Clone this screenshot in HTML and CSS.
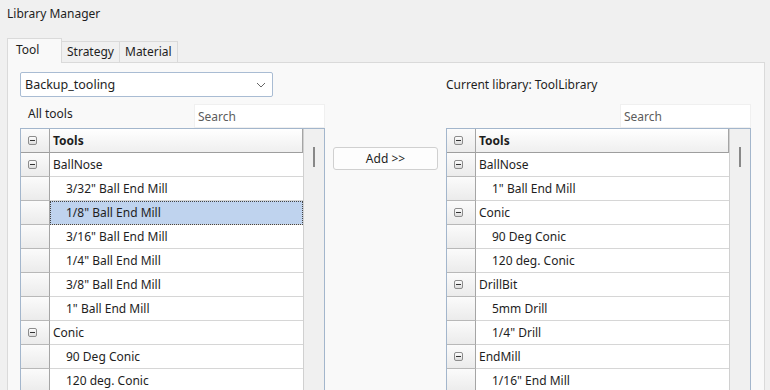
FILE: index.html
```html
<!DOCTYPE html>
<html lang="en">
<head>
    <meta charset="UTF-8">
    <title>Library Manager</title>
    <link rel="stylesheet" href="styles.css">
</head>
<body>
    <div class="title">Library Manager</div>

    <div class="tabs">
        <div class="tab active">Tool</div>
        <div class="tab">Strategy</div>
        <div class="tab">Material</div>
    </div>

    <div class="panel">
        <!-- left: tools from the selected backup library -->
        <div class="column">
            <div class="select">
                <span>Backup_tooling</span>
                <svg width="10" height="6" viewBox="0 0 10 6"><path d="M1 1 L5 5 L9 1" fill="none" stroke="#666" stroke-width="1"/></svg>
            </div>
            <div class="toolbar">
                <span class="label">All tools</span>
                <div class="search">Search</div>
            </div>
            <div class="grid">
                <div class="rows">
                    <div class="row head"><div class="rh"><i class="minus"></i></div><div class="cell">Tools</div></div>
                    <div class="row"><div class="rh"><i class="minus"></i></div><div class="cell">BallNose</div></div>
                    <div class="row"><div class="rh"></div><div class="cell child">3/32" Ball End Mill</div></div>
                    <div class="row"><div class="rh"></div><div class="cell child selected">1/8" Ball End Mill</div></div>
                    <div class="row"><div class="rh"></div><div class="cell child">3/16" Ball End Mill</div></div>
                    <div class="row"><div class="rh"></div><div class="cell child">1/4" Ball End Mill</div></div>
                    <div class="row"><div class="rh"></div><div class="cell child">3/8" Ball End Mill</div></div>
                    <div class="row"><div class="rh"></div><div class="cell child">1" Ball End Mill</div></div>
                    <div class="row"><div class="rh"><i class="minus"></i></div><div class="cell">Conic</div></div>
                    <div class="row"><div class="rh"></div><div class="cell child">90 Deg Conic</div></div>
                    <div class="row"><div class="rh"></div><div class="cell child">120 deg. Conic</div></div>
                </div>
                <div class="scroll"><div class="thumb"></div></div>
            </div>
        </div>

        <div class="middle">
            <button class="add">Add &gt;&gt;</button>
        </div>

        <!-- right: the current library -->
        <div class="column">
            <div class="current">Current library: ToolLibrary</div>
            <div class="toolbar">
                <span class="label"></span>
                <div class="search">Search</div>
            </div>
            <div class="grid">
                <div class="rows">
                    <div class="row head"><div class="rh"><i class="minus"></i></div><div class="cell">Tools</div></div>
                    <div class="row"><div class="rh"><i class="minus"></i></div><div class="cell">BallNose</div></div>
                    <div class="row"><div class="rh"></div><div class="cell child">1" Ball End Mill</div></div>
                    <div class="row"><div class="rh"><i class="minus"></i></div><div class="cell">Conic</div></div>
                    <div class="row"><div class="rh"></div><div class="cell child">90 Deg Conic</div></div>
                    <div class="row"><div class="rh"></div><div class="cell child">120 deg. Conic</div></div>
                    <div class="row"><div class="rh"><i class="minus"></i></div><div class="cell">DrillBit</div></div>
                    <div class="row"><div class="rh"></div><div class="cell child">5mm Drill</div></div>
                    <div class="row"><div class="rh"></div><div class="cell child">1/4" Drill</div></div>
                    <div class="row"><div class="rh"><i class="minus"></i></div><div class="cell">EndMill</div></div>
                    <div class="row"><div class="rh"></div><div class="cell child">1/16" End Mill</div></div>
                </div>
                <div class="scroll"><div class="thumb"></div></div>
            </div>
        </div>
    </div>
</body>
</html>
```

FILE: styles.css
```css
html, body {
    height: 390px;
    overflow: hidden;
}
body {
    margin: 0;
    display: flex;
    flex-direction: column;
    background-color: #f0f0f0;
    font-family: 'Noto Sans', 'Open Sans', sans-serif;
    font-size: 12px;
    color: #1e1e1e;
}
.title {
    height: 38px;
    flex: none;
    padding: 5px 0 0 7px;
    box-sizing: border-box;
}
.tabs {
    display: flex;
    flex: none;
    align-items: flex-end;
    height: 24px;
    margin-left: 7px;
}
.tab {
    width: 58px;
    height: 21px;
    padding-left: 5px;
    line-height: 20px;
    box-sizing: border-box;
    border: 1px solid #dadada;
    border-bottom: none;
    border-left: none;
    background-color: #f0f0f0;
}
.tab.active {
    width: 55px;
    height: 25px;
    margin-bottom: -1px;
    padding-left: 8px;
    line-height: 22px;
    border-left: 1px solid #dadada;
    background-color: #f9f9f9;
    position: relative;
}
.panel {
    display: flex;
    flex: 1;
    min-height: 0;
    overflow: hidden;
    margin: 0 5px 0 7px;
    padding: 9px 0 0 12px;
    border: 1px solid #dadada;
    border-bottom: none;
    background-color: #f9f9f9;
}
.column {
    width: 305px;
    display: flex;
    flex-direction: column;
    min-height: 0;
}
.select {
    width: 253px;
    height: 25px;
    flex: none;
    box-sizing: border-box;
    border: 1px solid #a9bcd3;
    border-radius: 2px;
    background-color: #fff;
    display: flex;
    align-items: center;
    justify-content: space-between;
    padding: 0 6px 0 4px;
    font-size: 12.5px;
}
.current {
    height: 25px;
    flex: none;
    line-height: 25px;
}
.toolbar {
    display: flex;
    flex: none;
    justify-content: space-between;
    height: 24px;
    margin-top: 7px;
}
.label {
    padding: 1px 0 0 8px;
    line-height: 18px;
}
.search {
    width: 131px;
    height: 24px;
    line-height: 24px;
    box-sizing: border-box;
    padding-left: 3px;
    background-color: #fff;
    border: 1px solid #f0f0f0;
    color: #5c5c5c;
}
.grid {
    display: flex;
    flex: 1;
    min-height: 0;
    overflow: hidden;
    border: 1px solid #a3b6cc;
    border-bottom: none;
}
.rows {
    flex: 1;
}
.row {
    display: flex;
    height: 24px;
}
.rh {
    width: 29px;
    flex: none;
    box-sizing: border-box;
    border-right: 1px solid #a5a5a5;
    border-bottom: 1px solid #b8b8b8;
    background: linear-gradient(#fbfbfb, #ebebeb);
    display: flex;
    align-items: center;
    padding-left: 7px;
}
.cell {
    flex: 1;
    box-sizing: border-box;
    border-bottom: 1px solid #d6d6d6;
    background-color: #fff;
    line-height: 23px;
    padding-left: 3px;
}
.cell.child {
    padding-left: 16px;
}
.cell.selected {
    background-color: #bfd3ee;
    outline: 1px dotted #444;
    outline-offset: -1px;
}
.head .cell {
    font-weight: bold;
    background: linear-gradient(#ffffff, #efefef);
    border-bottom: 1px solid #9e9e9e;
    border-right: 1px solid #a5a5a5;
}
.head .rh {
    border-bottom: 1px solid #9e9e9e;
}
.minus {
    display: block;
    width: 9px;
    height: 9px;
    box-sizing: border-box;
    border: 1px solid #8c8c8c;
    border-radius: 2px;
    background: linear-gradient(#fdfdfd, #dcdcdc) padding-box;
    position: relative;
}
.minus::after {
    content: "";
    position: absolute;
    left: 1px;
    right: 1px;
    top: 3px;
    height: 1px;
    background-color: #333;
}
.scroll {
    width: 20px;
    flex: none;
    background-color: #f0f0f0;
    border-left: 1px solid #d0d0d0;
}
.thumb {
    width: 2px;
    height: 20px;
    margin: 18px 0 0 9px;
    background-color: #888;
}
.middle {
    width: 121px;
    flex: none;
    padding-top: 75px;
    box-sizing: border-box;
}
.add {
    width: 105px;
    height: 23px;
    margin-left: 8px;
    border: 1px solid #d0d0d0;
    border-radius: 3px;
    background-color: #fdfdfd;
    font-family: inherit;
    font-size: 12px;
    color: #1e1e1e;
    padding: 0;
}
```
